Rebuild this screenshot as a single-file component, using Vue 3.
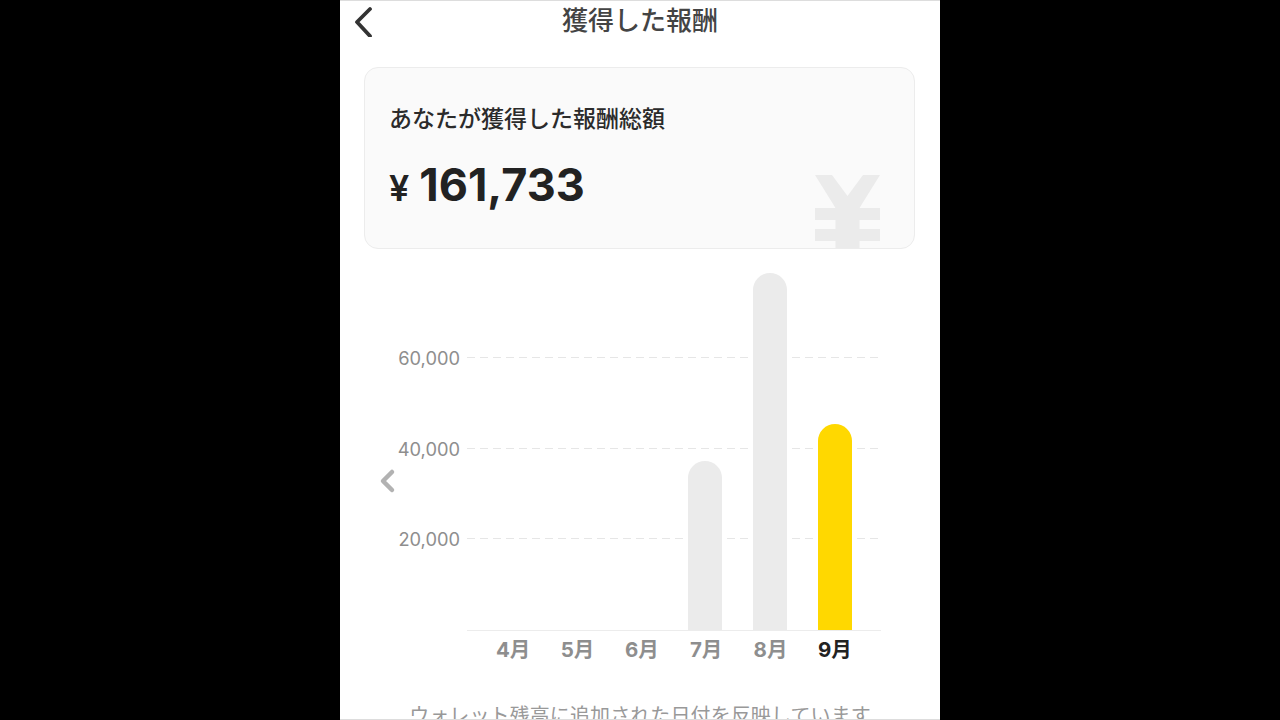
<template>
  <div class="page">
    <div class="phone">
      <header class="top">
        <svg class="back" width="24" height="34" viewBox="0 0 24 34">
          <path d="M19 6 L6 19 L19 33" fill="none" stroke="#333" stroke-width="3.800" stroke-linecap="round" stroke-linejoin="round" />
        </svg>
        <h1>獲得した報酬</h1>
      </header>

      <section class="card">
        <p class="card-title">あなたが獲得した報酬総額</p>
        <p class="amount"><span class="yen">¥</span>{{ total }}</p>
        <svg class="yen-mark" width="65" height="74" viewBox="0 0 65 74">
          <path d="M0 0 H17 L32.500 21 L48 0 H65 L44.500 33 V74 H20.500 V33 Z" fill="#ebebeb" />
          <rect x="0" y="33" width="65" height="12" fill="#ebebeb" />
          <rect x="0" y="54" width="65" height="12" fill="#ebebeb" />
        </svg>
      </section>

      <section class="chart">
        <svg class="prev" width="18" height="26" viewBox="0 0 18 26">
          <path d="M14 4 L5 13 L14 22" fill="none" stroke="#b2b2b2" stroke-width="4.500" stroke-linecap="round" stroke-linejoin="round" />
        </svg>
        <div class="plot">
          <div v-for="t in ticks" :key="t" class="grid-line" :style="{ bottom: t * scale + 'px' }">
            <span class="tick">{{ t.toLocaleString('en-US') }}</span>
          </div>
          <div class="bars">
            <div v-for="m in months" :key="m.label" class="slot">
              <div class="bar" :class="{ current: m.current }" :style="{ height: m.value * scale + 'px' }"></div>
            </div>
          </div>
        </div>
        <div class="months">
          <span v-for="m in months" :key="m.label" class="month" :class="{ current: m.current }">{{ m.label }}</span>
        </div>
      </section>

      <p class="note">ウォレット残高に追加された日付を反映しています</p>
    </div>
  </div>
</template>

<script setup>
const total = '161,733'
const scale = 0.004535
const ticks = [20000, 40000, 60000]
const months = [
  { label: '4月', value: 0 },
  { label: '5月', value: 0 },
  { label: '6月', value: 0 },
  { label: '7月', value: 37300 },
  { label: '8月', value: 78700 },
  { label: '9月', value: 45400, current: true },
]
</script>

<style>
html, body {
  background: #000;
}
</style>

<style scoped>
.page {
  width: 1280px;
  height: 720px;
  background: #000;
  display: flex;
  justify-content: center;
  overflow: hidden;
  font-family: Inter, "Noto Sans CJK JP", sans-serif;
}
.phone {
  width: 600px;
  height: 720px;
  box-sizing: border-box;
  background: #fff;
  border-top: 1px solid #ddd;
  border-bottom: 1px solid #ddd;
  overflow: hidden;
}
.top {
  height: 42px;
  position: relative;
  display: flex;
  align-items: center;
  justify-content: center;
}
.back {
  position: absolute;
  left: 11px;
  top: 2px;
}
h1 {
  margin: 0 0 2px;
  font-size: 26px;
  font-weight: 500;
  color: #444;
  line-height: 40px;
}
.card {
  position: relative;
  box-sizing: border-box;
  height: 182px;
  margin: 24px 25px 0 24px;
  padding: 36px 24px 0;
  background: #fafafa;
  border: 1px solid #ececec;
  border-radius: 14px;
  overflow: hidden;
}
.card-title {
  margin: 0;
  font-size: 23px;
  font-weight: 500;
  line-height: 30px;
  color: #2b2b2b;
}
.amount {
  margin: 25px 0 0;
  font-size: 45px;
  font-weight: 700;
  line-height: 52px;
  color: #222;
}
.yen {
  font-size: 36px;
  font-weight: 600;
  margin-right: 10px;
}
.yen-mark {
  position: absolute;
  right: 34px;
  bottom: -1px;
}
.chart {
  position: relative;
  padding-top: 20px;
}
.prev {
  position: absolute;
  left: 38px;
  top: 219px;
}
.plot {
  position: relative;
  width: 414px;
  height: 361px;
  margin-left: 127px;
  border-bottom: 1px solid #ececec;
}
.grid-line {
  position: absolute;
  left: 0;
  right: 0;
  height: 1px;
  background: repeating-linear-gradient(90deg, #e6e6e6 0 8px, transparent 8px 13px);
}
.tick {
  position: absolute;
  right: 421px;
  top: -11px;
  font-size: 18.300px;
  line-height: 24px;
  color: #8e8e8e;
}
.bars {
  position: relative;
  height: 100%;
  padding: 0 14px 0 12px;
  box-sizing: border-box;
  display: flex;
  align-items: flex-end;
}
.slot {
  flex: 1;
  display: flex;
  justify-content: center;
}
.bar {
  width: 34px;
  background: #ebebeb;
  border-radius: 17px 17px 0 0;
}
.bar.current {
  background: #ffd800;
}
.months {
  display: flex;
  width: 414px;
  box-sizing: border-box;
  margin: 6px 0 0 127px;
  padding: 0 14px;
}
.month {
  flex: 1;
  text-align: center;
  font-size: 20.500px;
  font-weight: 700;
  line-height: 26px;
  color: #8e8e8e;
}
.month.current {
  color: #222;
}
.note {
  margin: 39px 0 0;
  text-align: center;
  font-size: 20px;
  letter-spacing: 0.1px;
  line-height: 28px;
  color: #999;
}
</style>
